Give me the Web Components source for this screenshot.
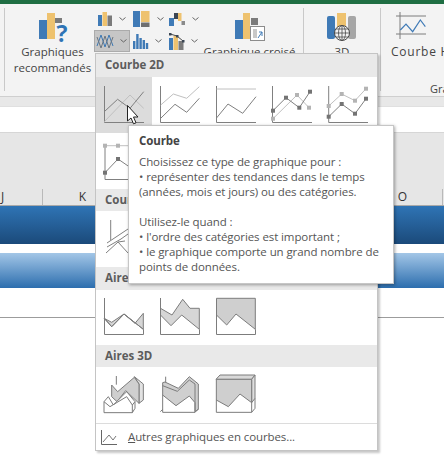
<!DOCTYPE html>
<html lang="fr"><head><meta charset="utf-8"><title>Courbe</title>
<style>
html,body{margin:0;padding:0;background:#fff}
body{width:444px;height:463px;overflow:hidden;font-family:"Open Sans","Noto Sans",sans-serif;position:relative}
svg{display:block;overflow:visible}
</style></head><body>
<template id="t-ribbon"><style>
:host{display:block;height:97px;box-sizing:border-box;background:#f3f3f3;border-top:4px solid #1f6e43;border-bottom:1px solid #cfcfcf;font-size:11.5px;color:#444;overflow:hidden;white-space:nowrap}
svg{display:block;overflow:visible}
.row{display:flex;height:92px;padding-left:4px}
.sep{width:1px;margin:4px 0 5px;background:#c9c9c9;flex:none}
.col{display:flex;flex-direction:column;align-items:center;padding-top:8px;line-height:16px;flex:none;box-sizing:border-box}
.c1{width:89px;padding-left:6px;padding-right:0}
.c1 svg{margin-left:5px}
.c3{width:101px;padding-right:6px}
.c4{width:76px}
.c5{width:70px;align-items:flex-start;padding-left:10px;letter-spacing:.75px;font-size:12px}
.c5 svg{margin-left:5px}
.c5 .g{margin-top:auto;margin-left:39px;letter-spacing:0;font-size:11px;line-height:14px}
.grid{display:grid;grid-template-columns:repeat(3,36px);grid-template-rows:22px 22px;padding-top:4px;width:108px;flex:none;height:48px;box-sizing:border-box;align-content:start}
.sm{display:flex;align-items:center;box-sizing:border-box;padding-left:3px;gap:6px;height:22px}
.sm.on{background:#c6c6c6;border:1px solid #ababab;padding-left:2px}
</style>
<div class="row">
<div class="sep"></div>
<div class="col c1">
<svg width="32" height="32" viewBox="0 0 32 32"><rect x="0" y="8" width="8" height="19" fill="#3f7ab6"/><rect x="8" y="1" width="8" height="26" fill="#eec26f"/><rect x="16" y="6" width="7" height="5" fill="#7b7b7b"/><text x="23" y="30" font-family="Open Sans" font-weight="700" font-size="23" text-anchor="middle" fill="#2f74b5">?</text></svg>
<span>Graphiques</span><span>recommandés</span></div>
<div class="grid">
<div class="sm"><svg width="16" height="14" viewBox="0 0 16 14"><rect x="1" y="3" width="4" height="11" fill="#3f7ab6"/><rect x="5.5" y="0" width="4.5" height="14" fill="#eec26f"/><rect x="10.5" y="3.5" width="4.5" height="10.5" fill="#7b7b7b"/></svg><x-chev></x-chev></div>
<div class="sm"><svg width="18" height="16" viewBox="0 0 18 16"><rect x="0" y="0" width="7" height="16" fill="#3f7ab6"/><rect x="8" y="0" width="8.5" height="11" fill="#eec26f"/><rect x="8" y="11.5" width="8.5" height="4.5" fill="#6f6f6f"/></svg><x-chev></x-chev></div>
<div class="sm"><svg width="17" height="15" viewBox="0 0 17 15"><rect x="0" y="6" width="5" height="8" fill="#3f7ab6"/><rect x="5" y="1" width="4" height="6" fill="#3b4654"/><rect x="9" y="1" width="3.5" height="8" fill="#eec26f"/><rect x="12.5" y="9" width="3.5" height="4" fill="#8a8a8a"/></svg><x-chev></x-chev></div>
<div class="sm on"><svg width="17" height="17" viewBox="0 0 17 17" fill="none"><path d="M0 13 4 2 8 14 12 2 16 13" stroke="#3c78b4"/><path d="M0 4 4 15 8 3 12 15 16 4" stroke="#6c7680"/></svg><x-chev></x-chev></div>
<div class="sm"><svg width="16" height="15" viewBox="0 0 16 15"><g fill="#3f7ab6"><rect x="0" y="7" width="2.4" height="8"/><rect x="3.2" y="0" width="2.4" height="15"/><rect x="6.4" y="4" width="2.4" height="11"/><rect x="9.6" y="6" width="2.4" height="9"/><rect x="12.8" y="9" width="2.4" height="6"/></g></svg><x-chev></x-chev></div>
<div class="sm"><svg width="16" height="17" viewBox="0 0 16 17"><rect x="0" y="5" width="4" height="12" fill="#3f7ab6"/><rect x="4.5" y="3" width="4.5" height="14" fill="#eec26f"/><rect x="9.5" y="8" width="5" height="9" fill="#7b7b7b"/><path d="M1 1 8 3 14 8" stroke="#4a4a4a" fill="none"/><rect x="0" y="0" width="2.5" height="2.5" fill="#3b4654"/><rect x="7" y="2" width="2.5" height="2.5" fill="#3b4654"/><rect x="13" y="7" width="2.5" height="2.5" fill="#3b4654"/></svg><x-chev></x-chev></div>
</div>
<div class="col c3">
<svg width="30" height="32" viewBox="0 0 30 32"><rect x="0" y="8" width="8" height="19" fill="#3f7ab6"/><rect x="8" y="1" width="7" height="26" fill="#eec26f"/><rect x="16" y="6" width="7" height="7" fill="#7b7b7b"/><rect x="15.5" y="14.5" width="14" height="14" fill="#fff" stroke="#8c8c8c"/><rect x="18" y="17" width="4" height="9" fill="#c8c8c8"/><path d="M23 26 27 20M27 24V20H24" stroke="#3f7ab6" fill="none"/></svg>
<span>Graphique croisé</span></div>
<div class="sep"></div>
<div class="col c4">
<svg width="30" height="32" viewBox="0 0 30 32" fill="none"><rect x="0" y="4" width="8" height="23" rx="2" fill="#3f7ab6"/><rect x="10" y="1" width="9" height="14" fill="#eec26f"/><rect x="21" y="4" width="8" height="23" rx="2" fill="#a6a6a6"/><circle cx="15" cy="21" r="7.5" fill="#f3f3f3" stroke="#4a4a4a"/><path d="M7.5 21H22.5M15 13.5V28.5M9 17H21M9 25H21" stroke="#4a4a4a" stroke-width=".8"/><ellipse cx="15" cy="21" rx="3.5" ry="7.5" stroke="#4a4a4a" stroke-width=".8"/></svg>
<span>3D</span></div>
<div class="sep"></div>
<div class="col c5">
<svg width="30" height="32" viewBox="522 36 90 96" fill="none"><path d="M522 48H612M522 102H612M534 36V117" stroke="#7d7d7d" stroke-width="3"/><path d="M535 90 552 72 572 95 595 60 610 80" stroke="#3f7ab6" stroke-width="3.5"/></svg>
<span>Courbe H</span><span class="g">Gra</span></div>
</div></template>

<template id="t-chev"><style>:host{display:block;width:7px;height:4px}svg{display:block}</style><svg width="7" height="4" viewBox="0 0 7 4" fill="none"><path d="M.5 .5 3.5 3 6.5 .5" stroke="#666"/></svg></template>

<template id="t-sheet"><style>
:host{display:block;height:366px;background:#fff}
.top{height:10px;background:#e8e8e8;border-bottom:1px solid #e0e0e0;box-sizing:border-box}
.fx{height:25px;background:#fff}
.hd{height:74px;box-sizing:border-box;background:#e6e6e6;border-top:1px solid #d6d6d6;border-bottom:1px solid #a9a9a9;display:flex;align-items:flex-end}
.cols{display:flex;margin-left:-37px}
.c{width:80px;height:16px;text-align:center;font:12px/16px "Open Sans",sans-serif;color:#333;box-sizing:border-box;border-right:1px solid #b9b9b9;flex:none}
.b1{height:38px;background:linear-gradient(#2f74b5,#1b4a7a)}
.gap{height:9px}
.b2{height:35px;background:linear-gradient(#a3c6e7,#2c6eae)}
.w{height:29px;border-bottom:1px solid #9c9c9c}
</style>
<div class="top"></div><div class="fx"></div>
<div class="hd"><div class="cols"><div class="c">J</div><div class="c">K</div><div class="c"></div><div class="c"></div><div class="c"></div><div class="c">O</div></div></div>
<div class="b1"></div><div class="gap"></div><div class="b2"></div><div class="w"></div></template>

<template id="t-section"><style>
:host{display:block}
.h{height:var(--hh,23px);background:#e9e9e9;font:700 11.5px/22px "Open Sans",sans-serif;color:#5c5c5c;padding-left:9px}
.r{display:grid;grid-template-columns:repeat(5,56px);grid-auto-rows:var(--rh,56px)}
</style><div class="h"></div><div class="r"><slot></slot></div></template>

<template id="t-thumb"><style>
:host{display:block;box-sizing:border-box;padding:var(--pt,9px) 8px 0;width:56px}
:host([on]){background:#dcdcdc}
</style><slot></slot></template>

<template id="t-menu"><style>
:host{display:block;position:absolute;left:95px;top:53px;width:283px;height:398px;box-sizing:border-box;background:#fff;border:1px solid #c4c4c4;box-shadow:2px 2px 2px rgba(0,0,0,.22);color:#555}
.link{height:27px;box-sizing:border-box;border-top:1px solid #dcdcdc;display:flex;align-items:center;padding-left:5px;gap:11px;font:11.5px/16px "Open Sans",sans-serif;letter-spacing:-.1px}
u{text-decoration:underline}
</style><slot></slot><div class="link"><svg style="display:block" width="16" height="15" viewBox="0 0 16 15" fill="none"><path d="M.5 0V14.5H16" stroke="#666"/><path d="M2 12 8 5 12 10 15 6" stroke="#777"/></svg><span><u>A</u>utres graphiques en courbes...</span></div></template>

<template id="t-tip"><style>
:host{display:block;position:absolute;left:128px;top:125px;width:266px;height:159px;box-sizing:border-box;background:#fff;border:1px solid #c6c6c6;box-shadow:1px 1px 3px rgba(0,0,0,.35);padding:7px 10px;font:11.5px/15px "Open Sans",sans-serif;letter-spacing:-.09px;color:#555;white-space:nowrap}
b{display:block;font-weight:700;font-size:11.5px;color:#444;margin-bottom:6px}
p{margin:0}
</style><b>Courbe</b>
<p>Choisissez ce type de graphique pour :</p><p>• représenter des tendances dans le temps</p><p>(années, mois et jours) ou des catégories.</p><p>&nbsp;</p><p>Utilisez-le quand :</p><p>• l'ordre des catégories est important ;</p><p>• le graphique comporte un grand nombre de</p><p>points de données.</p></template>

<x-ribbon></x-ribbon>
<x-sheet></x-sheet>
<x-menu>
<x-section label="Courbe 2D" style="--hh:23px;--rh:56px">
<x-thumb on><svg width="40" height="37" viewBox="0 0 40 37" fill="none"><path d="M.5 0V36.5H40" stroke="#808080"/><path d="M.3 35.7 26 9 39.7 22.3" stroke="#c0c0c0"/><path d="M.3 25.7 13.6 13.3 26 22.3 39.7 5.7" stroke="#808080"/></svg></x-thumb>
<x-thumb><svg width="40" height="37" viewBox="0 0 40 37" fill="none"><path d="M.5 0V36.5H40" stroke="#808080"/><path d="M.7 19 13.3 8 26.7 12.3 39.3 .7" stroke="#c0c0c0"/><path d="M.7 32.3 15 18.3 26.7 26.3 39.3 12.3" stroke="#808080"/></svg></x-thumb>
<x-thumb><svg width="40" height="37" viewBox="0 0 40 37" fill="none"><path d="M.5 0V36.5H40" stroke="#808080"/><path d="M.5 3H40" stroke="#c0c0c0"/><path d="M.5 32 12 18 26.7 27.3 40 10.7" stroke="#808080"/></svg></x-thumb>
<x-thumb><svg width="40" height="37" viewBox="0 0 40 37" fill="none"><path d="M.5 0V36.5H40" stroke="#808080"/><path d="M1 32.7 25 9 37 21.7" stroke="#c0c0c0"/><path d="M1 24.7 14 11.7 27.3 21.7 38 5.7" stroke="#808080"/><g fill="#b4b4b4"><rect x="-1" y="30.7" width="4" height="4"/><rect x="23" y="7" width="4" height="4"/><rect x="35" y="19.7" width="4" height="4"/></g><g fill="#747474"><rect x="-1" y="22.7" width="4" height="4"/><rect x="12" y="9.7" width="4" height="4"/><rect x="25.3" y="19.7" width="4" height="4"/><rect x="36" y="3.7" width="4" height="4"/></g></svg></x-thumb>
<x-thumb><svg width="40" height="37" viewBox="0 0 40 37" fill="none"><path d="M.7 0V36.5H40" stroke="#808080"/><path d="M.7 20 13.7 8 27 14.7 38 2.7" stroke="#c0c0c0"/><path d="M.7 30.7 13.7 18 27 27.7 38 12.7" stroke="#808080"/><g fill="#b4b4b4"><rect x="-1.3" y="18" width="4" height="4"/><rect x="11.7" y="6" width="4" height="4"/><rect x="25" y="12.7" width="4" height="4"/><rect x="36" y=".7" width="4" height="4"/></g><g fill="#747474"><rect x="-1.3" y="28.7" width="4" height="4"/><rect x="11.7" y="16" width="4" height="4"/><rect x="25" y="25.7" width="4" height="4"/><rect x="36" y="10.7" width="4" height="4"/></g></svg></x-thumb>
<x-thumb style="--pt:10px"><svg width="40" height="37" viewBox="0 0 40 37" fill="none"><path d="M1 2V36.5H40" stroke="#808080"/><path d="M1 2.7H40" stroke="#c0c0c0"/><path d="M1 29.7 14 16 27 25 38 10" stroke="#808080"/><g fill="#b4b4b4"><rect x="-1" y=".7" width="4" height="4"/><rect x="12" y=".7" width="4" height="4"/></g><g fill="#747474"><rect x="-1" y="27.7" width="4" height="4"/><rect x="12" y="14" width="4" height="4"/></g></svg></x-thumb>
</x-section>
<x-section label="Courbe 3D" style="--hh:22px;--rh:56px">
<x-thumb><svg width="40" height="33" viewBox="0 0 40 33" fill="none" stroke="#808080"><path d="M6.7 0V20M3 23 15 15 24 9M3 27 17 19 24 14M2 33 14 22 24 33M14 22 21 21"/></svg></x-thumb>
</x-section>
<x-section label="Aires" style="--hh:23px;--rh:55px">
<x-thumb style="--pt:8px"><svg width="40" height="37" viewBox="0 0 40 37" fill="none" stroke="#7c7c7c"><path d="M0 20.3 7.7 24.3 20 16 31 25.3 39.3 15.3V31.3L20 16 7.7 28.7Z" fill="#d6d6d6"/><path d="M.5 0V36.5H39.5V31.3"/><path d="M.5 20.3 7.7 28.7 20 16 39.3 31.3"/></svg></x-thumb>
<x-thumb style="--pt:8px"><svg width="40" height="37" viewBox="0 0 40 37" fill="none" stroke="#7c7c7c"><path d="M.5 10.3 12 17 22.7 1.3 30 10.3H39.3V31.3L21.7 17 11 27.7.5 17Z" fill="#d6d6d6"/><path d="M.5 0V36.5H39.5V31.3"/></svg></x-thumb>
<x-thumb style="--pt:8px"><svg width="40" height="37" viewBox="0 0 40 37" fill="none" stroke="#7c7c7c"><path d="M.5 .3H39.3V31.3L20 16 10.7 27 .5 17Z" fill="#cfcfcf"/><path d="M.5 17V36.5H39.5V31.3"/></svg></x-thumb>
</x-section>
<x-section label="Aires 3D" style="--hh:22px;--rh:56px">
<x-thumb><svg width="40" height="37" viewBox="27 18 120 111" fill="none" stroke="#7c7c7c" stroke-width="3"><path d="M64 18V44"/><path d="M118 20 145 42V90L132 100V42Z" fill="#e2e2e2"/><path d="M50 45 68 65 118 22 132 42V100L92 62 66 95 50 80Z" fill="#cfcfcf"/><path d="M27 95 40 80 55 105 95 65 120 95V115L112 128H27Z" fill="#fff"/><path d="M27 95 45 110 95 80 112 105V128M112 105 120 95"/></svg></x-thumb>
<x-thumb><svg width="40" height="37" viewBox="195 18 120 111" fill="none" stroke="#7c7c7c" stroke-width="3"><path d="M212 20V42"/><path d="M203 38 210 36 250 55 283 20 310 42V118L300 125V98L283 78 243 107 203 75Z" fill="#cfcfcf"/><path d="M203 47 247 64 283 30 300 42V98"/><path d="M203 75V127H300L310 117"/><path d="M300 98V127M196 125 203 118"/></svg></x-thumb>
<x-thumb><svg width="40" height="37" viewBox="363 18 120 111" fill="none" stroke="#7c7c7c" stroke-width="3"><path d="M363 28 375 15H480L470 28Z" fill="#d9d9d9"/><path d="M470 28 480 15V85L470 98Z" fill="#dedede"/><path d="M364 28H470V98L435 72 400 110 364 90Z" fill="#cfcfcf"/><path d="M364 90V127H470L480 115V85M470 98V127"/></svg></x-thumb>
</x-section>
</x-menu>
<x-tip></x-tip>
<svg id="cur" style="position:absolute;left:127px;top:105px" width="13" height="20" viewBox="0 0 13 20"><path d="M.5 .5V16L4 13 6.5 18.8 9 17.8 6.5 12H11Z" fill="#fff" stroke="#222"/></svg>
<script>
function def(name,tid){customElements.define(name,class extends HTMLElement{constructor(){super();const r=this.attachShadow({mode:"open"});r.appendChild(document.getElementById(tid).content.cloneNode(true));}})}
def("x-chev","t-chev");
def("x-ribbon","t-ribbon");
def("x-sheet","t-sheet");
def("x-thumb","t-thumb");
def("x-menu","t-menu");
def("x-tip","t-tip");
customElements.define("x-section",class extends HTMLElement{constructor(){super();const r=this.attachShadow({mode:"open"});r.appendChild(document.getElementById("t-section").content.cloneNode(true));}connectedCallback(){this.shadowRoot.querySelector(".h").textContent=this.getAttribute("label")}});
</script>
</body></html>
